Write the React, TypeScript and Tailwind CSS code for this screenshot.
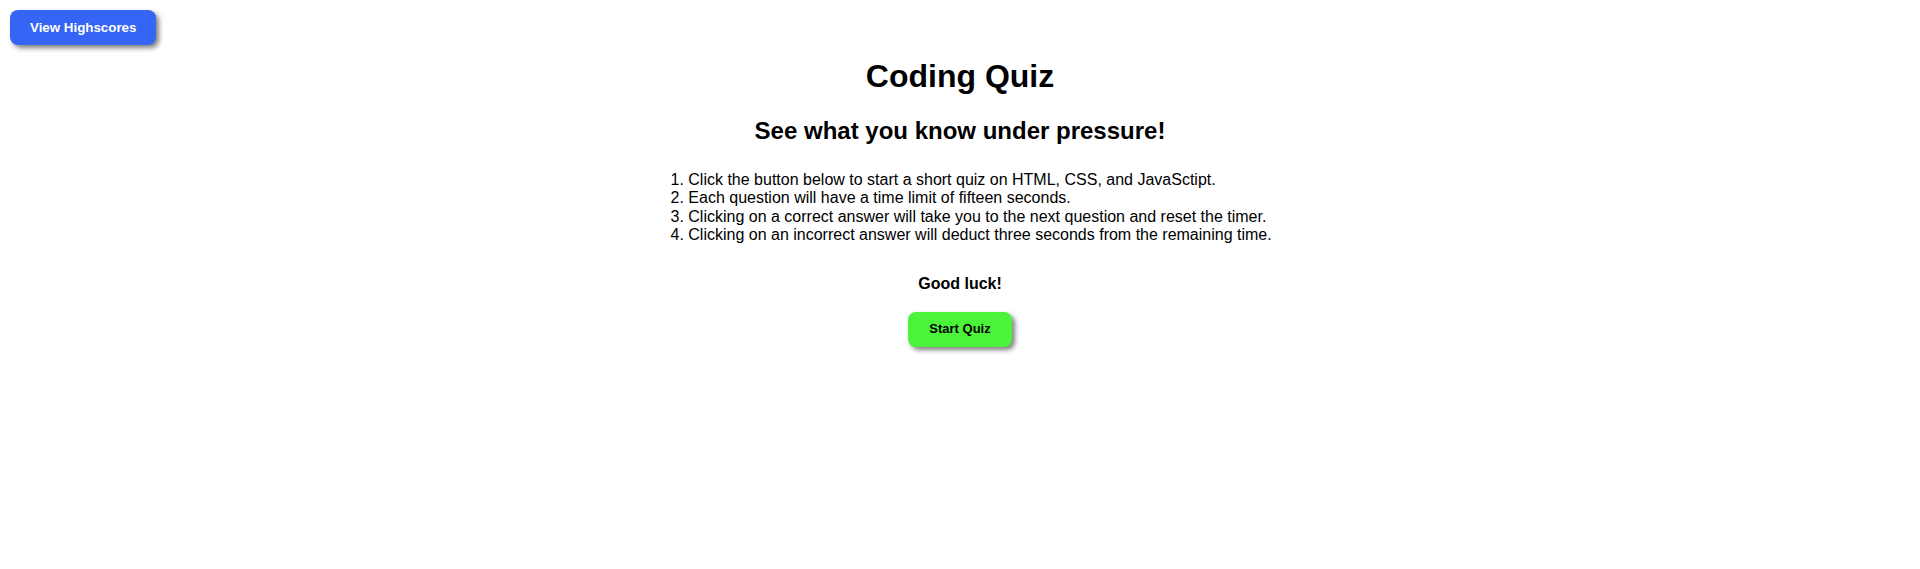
import React from 'react';

const steps = [
  'Click the button below to start a short quiz on HTML, CSS, and JavaSctipt.',
  'Each question will have a time limit of fifteen seconds.',
  'Clicking on a correct answer will take you to the next question and reset the timer.',
  'Clicking on an incorrect answer will deduct three seconds from the remaining time.',
];

export default function App() {
  return (
    <div className="min-h-screen bg-white text-black font-['Liberation_Sans',Arial,sans-serif]">
      <header className="pt-[10px] pl-[10px]">
        <button className="h-[35px] px-5 rounded-lg bg-[#3664f4] text-white text-[13.33px] font-bold shadow-[3px_3px_5px_rgba(0,0,0,0.5)]">
          View Highscores
        </button>
      </header>

      <main className="text-center">
        <h1 className="mt-[13px] text-[32px] leading-[37px] font-bold">Coding Quiz</h1>
        <h2 className="mt-[22px] text-[24px] leading-[28px] font-bold">See what you know under pressure!</h2>

        <ol className="mt-[26px] inline-block pl-10 text-left text-base leading-[18.4px] list-decimal">
          {steps.map(s => (
            <li key={s}>{s}</li>
          ))}
        </ol>

        <p className="mt-[28px] text-base leading-[18.4px] font-bold">Good luck!</p>
        <button className="mt-[18px] h-[35px] px-[21px] rounded-lg bg-[#4bf43b] text-black text-[13px] font-bold shadow-[3px_3px_5px_rgba(0,0,0,0.5)]">
          Start Quiz
        </button>
      </main>
    </div>
  );
}
